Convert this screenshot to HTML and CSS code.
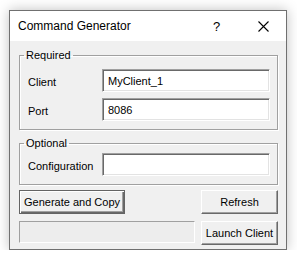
FILE: index.html
```html
<!DOCTYPE html>
<html lang="en">
<head>
    <meta charset="UTF-8">
    <title>Command Generator</title>
    <link rel="stylesheet" href="styles.css">
</head>
<body>
    <div class="window">
        <div class="titlebar">
            <span class="title">Command Generator</span>
            <span class="help">?</span>
            <span class="close">
                <svg width="11" height="11" viewBox="0 0 11 11">
                    <path d="M0.5 0.5 L10.5 10.5 M10.5 0.5 L0.5 10.5" stroke="#000" stroke-width="1.1" fill="none"/>
                </svg>
            </span>
        </div>

        <div class="content">
            <fieldset class="group">
                <legend>Required</legend>
                <div class="row">
                    <label>Client</label>
                    <div class="field">MyClient_1</div>
                </div>
                <div class="row">
                    <label>Port</label>
                    <div class="field">8086</div>
                </div>
            </fieldset>

            <fieldset class="group optional">
                <legend>Optional</legend>
                <div class="row">
                    <label>Configuration</label>
                    <div class="field"></div>
                </div>
            </fieldset>

            <div class="actions">
                <button class="btn default wide">Generate and Copy</button>
                <button class="btn">Refresh</button>
            </div>
            <div class="actions second">
                <div class="progress"></div>
                <button class="btn">Launch Client</button>
            </div>
        </div>
    </div>
</body>
</html>
```

FILE: styles.css
```css
* {
    margin: 0;
    padding: 0;
    box-sizing: border-box;
}

body {
    background: #ffffff;
    padding: 10px 0 0 9px;
    font-family: 'Liberation Sans', Arial, sans-serif;
    font-size: 11px;
    color: #000;
}

.window {
    width: 278px;
    height: 240px;
    border: 1px solid #707070;
    background: #f0f0f0;
    box-shadow: 0 0 12px rgba(0, 0, 0, 0.25);
}

.titlebar {
    height: 30px;
    background: #fff;
    display: flex;
    align-items: center;
    padding-left: 8px;
}

.title {
    font-size: 12px;
    flex: 1;
    padding-bottom: 1px;
}

.help {
    font-size: 13px;
    width: 45px;
}

.close {
    width: 28px;
    display: flex;
    align-items: center;
}

.content {
    padding: 8px 8px 0 9px;
}

.group {
    border: 1px solid #a0a0a0;
    box-shadow: 1px 1px 0 #fff, inset 1px 1px 0 #fff;
    padding: 7px 7px 8px 8px;
    width: 259px;
    min-inline-size: 0;
}

.group legend {
    margin-left: -4px;
    padding: 0 2px;
    line-height: 13px;
}

.optional {
    margin-top: 7px;
    padding-top: 3px;
}

.row {
    display: flex;
    align-items: center;
    height: 23px;
}

.row + .row {
    margin-top: 6px;
}

.row label {
    width: 74px;
    padding-top: 2px;
}

.field {
    width: 168px;
    height: 23px;
    background: #fff;
    border-top: 1px solid #a0a0a0;
    border-left: 1px solid #a0a0a0;
    border-right: 1px solid #fff;
    border-bottom: 1px solid #fff;
    box-shadow: inset 1px 1px 0 #696969, inset -1px -1px 0 #e3e3e3;
    padding: 3px 5px;
    line-height: 16px;
}

.actions {
    display: flex;
    justify-content: space-between;
    margin-top: 5px;
    width: 259px;
}

.actions.second {
    margin-top: 7px;
}

.btn {
    font-family: inherit;
    font-size: 11px;
    color: #000;
    width: 77px;
    height: 24px;
    background: #f0f0f0;
    border-top: 1px solid #fff;
    border-left: 1px solid #fff;
    border-right: 1px solid #696969;
    border-bottom: 1px solid #696969;
    box-shadow: inset -1px -1px 0 #a0a0a0;
}

.btn.default {
    border: 1px solid #646464;
    box-shadow: inset 1px 1px 0 #fff, inset -1px -1px 0 #696969, inset -2px -2px 0 #a0a0a0;
}

.btn.wide {
    width: 106px;
}

.progress {
    width: 176px;
    height: 22px;
    background: #ededed;
    border-top: 1px solid #a0a0a0;
    border-left: 1px solid #a0a0a0;
    border-right: 1px solid #fff;
    border-bottom: 1px solid #fff;
    align-self: flex-start;
}
```
